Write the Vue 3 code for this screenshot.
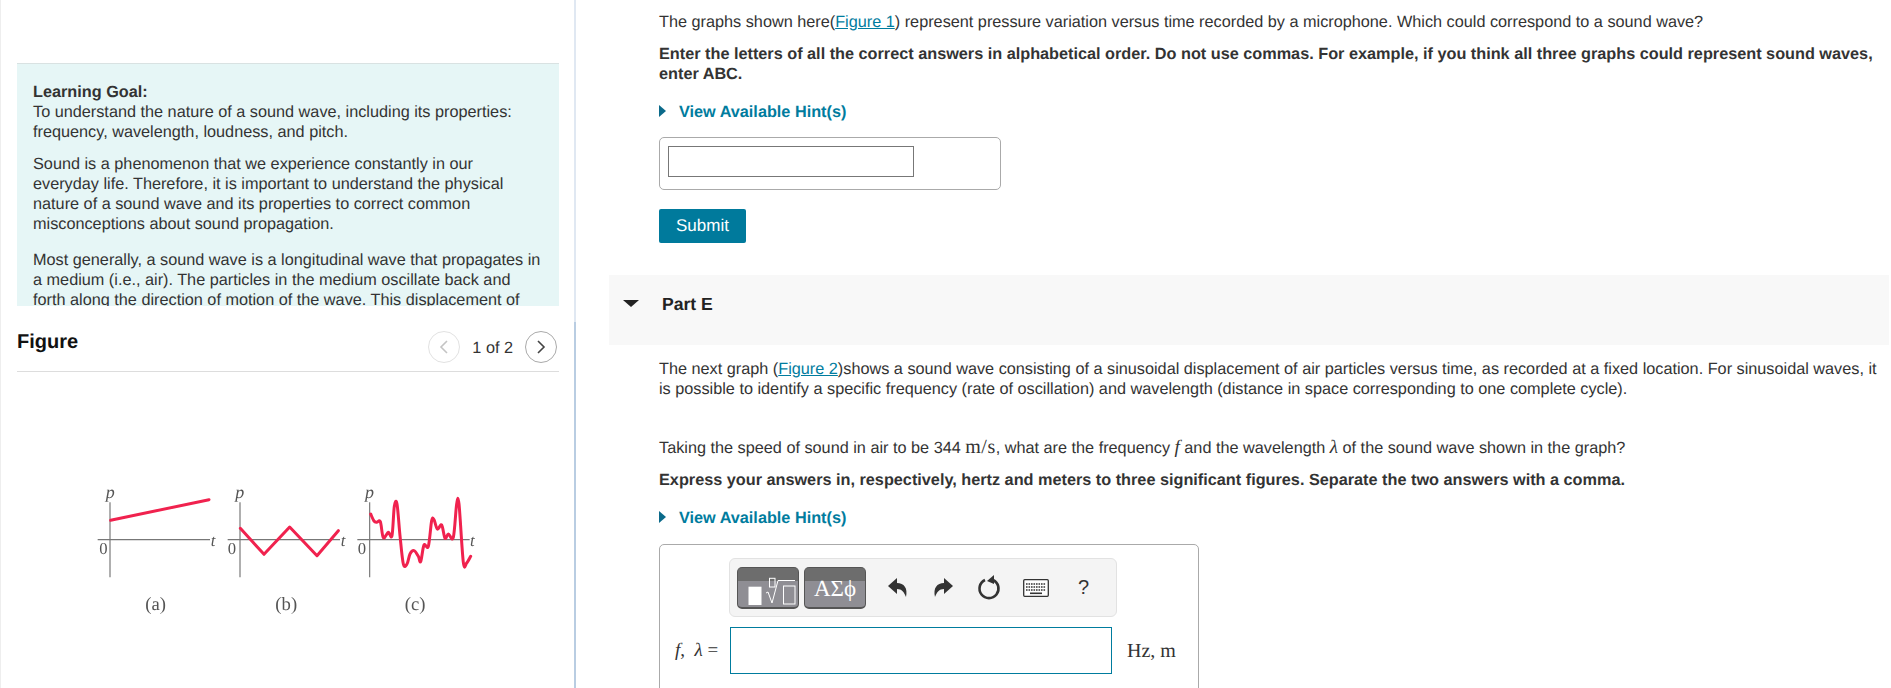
<template>
  <div class="page">
    <aside class="left">
      <section class="intro">
        <p class="goal"><b>Learning Goal:</b><br />To understand the nature of a sound wave, including its properties: frequency, wavelength, loudness, and pitch.</p>
        <p class="p2">Sound is a phenomenon that we experience constantly in our everyday life. Therefore, it is important to understand the physical nature of a sound wave and its properties to correct common misconceptions about sound propagation.</p>
        <p class="p3">Most generally, a sound wave is a longitudinal wave that propagates in a medium (i.e., air). The particles in the medium oscillate back and forth along the direction of motion of the wave. This displacement of</p>
      </section>
      <header class="fig-head">
        <h2>Figure</h2>
        <div class="pager">
          <span class="circle off">
            <svg width="12" height="18" viewBox="0 0 12 18"><path d="M9 3 3 9l6 6" fill="none" stroke="#c4c4c4" stroke-width="1.6" /></svg>
          </span>
          <span class="count">1 of 2</span>
          <span class="circle">
            <svg width="12" height="18" viewBox="0 0 12 18"><path d="m3 3 6 6-6 6" fill="none" stroke="#444" stroke-width="1.6" /></svg>
          </span>
        </div>
      </header>
      <svg class="graphs" width="440" height="170" viewBox="0 0 1320 510">
        <g stroke="#777" stroke-width="3.5" fill="none">
          <path v-for="x in axes" :key="x" :d="`M${x} 100V325M${x - 37} 212H${x + 300}`" />
        </g>
        <g fill="none" stroke="#f0224e" stroke-width="9" stroke-linejoin="round" stroke-linecap="round">
          <path d="M152 154 447 92" />
          <path d="M541 178 612 256 689 174 771 260 835 185" />
          <path :d="wave" />
        </g>
        <g class="fig-text" fill="#555">
          <text x="137" y="88" font-style="italic" font-size="54">p</text>
          <text x="526" y="88" font-style="italic" font-size="54">p</text>
          <text x="915" y="88" font-style="italic" font-size="54">p</text>
          <text x="452" y="230" font-style="italic" font-size="50">t</text>
          <text x="842" y="230" font-style="italic" font-size="50">t</text>
          <text x="1230" y="230" font-style="italic" font-size="50">t</text>
          <text x="118" y="256" font-size="50">0</text>
          <text x="503" y="256" font-size="50">0</text>
          <text x="893" y="256" font-size="50">0</text>
          <text x="256" y="424" font-size="56">(a)</text>
          <text x="646" y="424" font-size="56">(b)</text>
          <text x="1034" y="424" font-size="56">(c)</text>
        </g>
      </svg>
    </aside>

    <main class="right">
      <div class="block">
        <p class="first">The graphs shown here(<a>Figure 1</a>) represent pressure variation versus time recorded by a microphone. Which could correspond to a sound wave?</p>
        <p class="instr"><b>Enter the letters of all the correct answers in alphabetical order. Do not use commas. For example, if you think all three graphs could represent sound waves, enter ABC.</b></p>
        <div class="hint"><i class="tri"></i>View Available Hint(s)</div>
        <div class="answer"><div class="plain-input"></div></div>
        <button class="submit">Submit</button>
      </div>

      <div class="part">
        <i class="tri-down"></i>
        <span>Part E</span>
      </div>

      <div class="block">
        <p class="next">The next graph (<a>Figure 2</a>)shows a sound wave consisting of a sinusoidal displacement of air particles versus time, as recorded at a fixed location. For sinusoidal waves, it is possible to identify a specific frequency (rate of oscillation) and wavelength (distance in space corresponding to one complete cycle).</p>
        <p class="taking">Taking the speed of sound in air to be 344 <span class="math units">m/s</span>, what are the frequency <span class="math"><em>f</em></span> and the wavelength <span class="math"><em>λ</em></span> of the sound wave shown in the graph?</p>
        <p class="instr2"><b>Express your answers in, respectively, hertz and meters to three significant figures. Separate the two answers with a comma.</b></p>
        <div class="hint hint2"><i class="tri"></i>View Available Hint(s)</div>

        <div class="math-box">
          <div class="toolbar">
            <div class="tool-btn">
              <svg width="60" height="40" viewBox="0 0 60 40">
                <rect x="10.5" y="19.7" width="13" height="18.3" fill="#fff" />
                <path d="M28 26l2-1 4 11 6-22.500h17" fill="none" stroke="#fff" stroke-width="1" />
                <rect x="31.500" y="11.300" width="5.500" height="8.700" fill="none" stroke="#fff" stroke-width="1" />
                <rect x="45.500" y="19" width="11.500" height="18" fill="none" stroke="#fff" stroke-width="1" />
              </svg>
            </div>
            <div class="tool-btn greek">ΑΣϕ</div>
            <div class="tools">
              <svg width="24" height="26" viewBox="0 0 24 26"><path d="M2 11 11 3v5c7 0 11 5 9 14-2-5-4-8-9-8v5z" fill="#333" /></svg>
              <svg width="24" height="26" viewBox="0 0 24 26"><path d="M22 11 13 3v5C6 8 2 13 4 22c2-5 4-8 9-8v5z" fill="#333" /></svg>
              <svg width="26" height="28" viewBox="0 0 26 28"><path d="M9 6a9.5 9.5 0 1 0 8 0" fill="none" stroke="#333" stroke-width="2.6" /><path d="M18 1v9l-7-3z" fill="#333" /></svg>
              <svg width="26" height="18" viewBox="0 0 26 18">
                <rect x=".7" y=".7" width="24.6" height="16.6" rx="1" fill="#fff" stroke="#333" stroke-width="1.3" />
                <path d="M3 5h20M3 8h20M3 11h20" stroke="#333" stroke-width="1.6" stroke-dasharray="1.6 .9" />
                <path d="M7 14.3h12" stroke="#333" stroke-width="1.6" />
              </svg>
              <span class="help">?</span>
            </div>
          </div>
          <div class="math-row">
            <span class="var"><em>f</em>, &nbsp;<em>λ</em> =</span>
            <div class="math-input"></div>
            <span class="unit">Hz, m</span>
          </div>
        </div>
      </div>
    </main>
  </div>
</template>

<script setup>
const axes = [150, 540, 929];

// hand traced from the reference curve (c)
const pts = [
  [932, 135], [942, 156], [950, 160], [961, 158], [970, 206], [985, 190], [996, 200],
  [1003, 112], [1011, 105], [1020, 200], [1030, 285], [1041, 285], [1050, 255], [1062, 245],
  [1075, 262], [1082, 278], [1092, 228], [1105, 232], [1115, 155], [1122, 152], [1132, 180],
  [1145, 168], [1155, 208], [1165, 195], [1180, 205], [1190, 105], [1197, 105], [1210, 280],
  [1220, 282], [1232, 262],
];

function smooth(list) {
  let d = `M${list[0][0]} ${list[0][1]}`;
  for (let i = 0; i < list.length - 1; i++) {
    const p0 = list[i - 1] || list[i];
    const p1 = list[i];
    const p2 = list[i + 1];
    const p3 = list[i + 2] || p2;
    const c1 = [p1[0] + (p2[0] - p0[0]) / 6, p1[1] + (p2[1] - p0[1]) / 6];
    const c2 = [p2[0] - (p3[0] - p1[0]) / 6, p2[1] - (p3[1] - p1[1]) / 6];
    d += `C${c1[0]} ${c1[1]} ${c2[0]} ${c2[1]} ${p2[0]} ${p2[1]}`;
  }
  return d;
}

const wave = smooth(pts);
</script>

<style>
html,
body {
  margin: 0;
  background: #fff;
}
</style>

<style scoped>
.page {
  display: flex;
  height: 688px;
  overflow: hidden;
  font-family: "Liberation Sans", Arial, sans-serif;
  font-size: 16.25px;
  line-height: 20px;
  color: #333;
  text-rendering: geometricPrecision;
}

p {
  margin: 0;
}

.left {
  width: 576px;
  flex: none;
  box-sizing: border-box;
  padding: 63px 18px 0 16px;
  border-left: 1px solid #eee;
  background: linear-gradient(#e0e8f2 0 322px, #b9cde2 322px) right top / 2px 100% no-repeat;
}

.intro {
  width: 542px;
  height: 243px;
  box-sizing: border-box;
  padding: 18px 17px 0 16px;
  background: #e6f6f6;
  border-top: 1px solid #d9e2e2;
  overflow: hidden;
}

.p2 {
  margin-top: 12px;
}

.p3 {
  margin-top: 16px;
}

.fig-head {
  display: flex;
  justify-content: space-between;
  align-items: flex-start;
  width: 542px;
  height: 66px;
  box-sizing: border-box;
  border-bottom: 1px solid #ddd;
}

.fig-head h2 {
  margin: 24px 0 0;
  font-size: 20px;
  line-height: 24px;
  color: #111;
}

.pager {
  display: flex;
  align-items: center;
  gap: 12px;
  margin: 25px 2px 0 0;
  color: #333;
}

.count {
  margin-top: 2px;
}

.circle {
  display: flex;
  align-items: center;
  justify-content: center;
  width: 30px;
  height: 30px;
  border: 1px solid #aaa;
  border-radius: 50%;
}

.circle.off {
  border-color: #e2e2e2;
}

.graphs {
  display: block;
  margin: 97px 0 0 43px;
  filter: blur(0.4px);
}

.fig-text {
  font-family: "Liberation Serif", serif;
}

.right {
  flex: 1;
  min-width: 0;
  padding: 12px 2px 0 33px;
}

.block {
  padding-left: 50px;
  padding-right: 9px;
}

.instr {
  margin-top: 12px;
}

a {
  color: #007c9e;
  text-decoration: underline;
}

.hint {
  display: flex;
  align-items: center;
  margin-top: 18px;
  font-weight: 700;
  color: #007c9e;
}

.tri {
  width: 0;
  height: 0;
  margin-right: 13px;
  margin-top: -3px;
  border-left: 7px solid #0b6a8a;
  border-top: 6.5px solid transparent;
  border-bottom: 6.5px solid transparent;
}

.answer {
  width: 342px;
  height: 53px;
  box-sizing: border-box;
  margin-top: 15px;
  padding: 8px;
  border: 1px solid #aaa;
  border-radius: 5px;
}

.plain-input {
  width: 246px;
  height: 31px;
  box-sizing: border-box;
  border: 1px solid #777;
}

.submit {
  display: block;
  width: 87px;
  height: 34px;
  margin-top: 19px;
  padding: 0;
  border: 0;
  border-radius: 2px;
  background: #007a9c;
  color: #fff;
  font: 17px/20px "Liberation Sans", Arial, sans-serif;
  text-rendering: geometricPrecision;
}

.part {
  display: flex;
  align-items: center;
  height: 70px;
  margin-top: 32px;
  padding-bottom: 13px;
  box-sizing: border-box;
  background: #f8f8f8;
  font-size: 17.6px;
  font-weight: 700;
  color: #222;
}

.tri-down {
  width: 0;
  height: 0;
  margin: 0 23px 0 14px;
  border-top: 7px solid #222;
  border-left: 8px solid transparent;
  border-right: 8px solid transparent;
}

.next {
  margin-top: 14px;
}

.taking {
  margin-top: 38px;
}

.math {
  font-family: "Liberation Serif", serif;
  font-size: 19px;
  line-height: 1;
}

.units {
  font-size: 20px;
  letter-spacing: 0.5px;
}

.instr2 {
  margin-top: 12px;
}

.hint2 {
  margin-top: 18px;
}

.math-box {
  width: 540px;
  height: 160px;
  box-sizing: border-box;
  margin-top: 16px;
  padding-top: 13px;
  border: 1px solid #aaa;
  border-radius: 5px;
}

.toolbar {
  display: flex;
  align-items: center;
  gap: 5px;
  width: 388px;
  height: 59px;
  box-sizing: border-box;
  margin-left: 69px;
  padding-left: 7px;
  background: #f4f4f4;
  border: 1px solid #e2e2e2;
  border-radius: 6px;
}

.tool-btn {
  display: flex;
  align-items: flex-end;
  justify-content: center;
  width: 62px;
  height: 42px;
  box-sizing: border-box;
  border: 1px solid #555;
  border-bottom-width: 2px;
  border-radius: 5px;
  background: linear-gradient(#6d6d6d 0 34%, #8f8e94 34% 100%);
}

.greek {
  color: #fff;
  font: 23px/30px "Liberation Serif", serif;
  padding-bottom: 3px;
}

.tools {
  display: flex;
  align-items: center;
  gap: 21px;
  margin-left: 15px;
}

.help {
  margin-left: 8px;
  font-size: 20px;
  color: #333;
}

.math-row {
  display: flex;
  align-items: center;
  margin-top: 10px;
}

.var {
  width: 70px;
  box-sizing: border-box;
  padding-left: 15px;
  font-family: "Liberation Serif", serif;
  font-size: 19px;
}

.math-input {
  width: 382px;
  height: 47px;
  box-sizing: border-box;
  border: 1px solid #007c9e;
}

.unit {
  margin-left: 15px;
  font-family: "Liberation Serif", serif;
  font-size: 20px;
}
</style>
